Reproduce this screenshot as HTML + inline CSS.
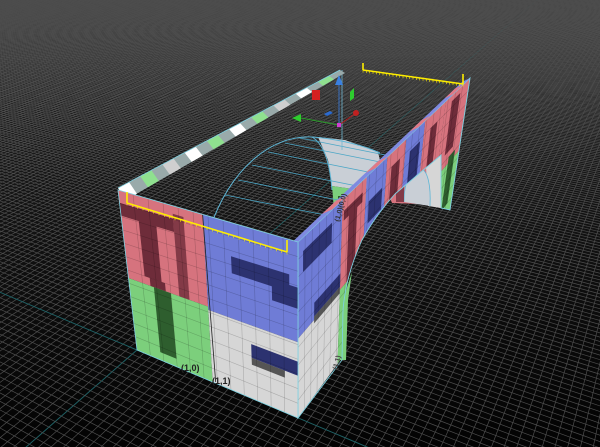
<!DOCTYPE html>
<html><head><meta charset="utf-8"><style>
html,body{margin:0;padding:0;background:#0a0a0a;width:600px;height:447px;overflow:hidden}
svg{display:block}
text{font-family:"Liberation Sans",sans-serif;font-size:9px;fill:#222;font-weight:bold}
</style></head><body>
<svg id="s" width="600" height="447" viewBox="0 0 600 447" xmlns="http://www.w3.org/2000/svg">
<defs>
<linearGradient id="bg" x1="0" y1="0" x2="0" y2="1">
<stop offset="0" stop-color="#2c2c2c"/><stop offset="0.4" stop-color="#151515"/><stop offset="1" stop-color="#030303"/>
</linearGradient>
</defs>
<rect width="600" height="447" fill="url(#bg)"/>
<g id="grid"></g>
<g id="box"></g>
<text x="181" y="371">(1,0)</text>
<text x="212" y="384">(1,1)</text>
<text x="0" y="0" transform="translate(337,370) rotate(-75)" style="font-size:7px;fill:#444">(1,1)</text>
<text x="0" y="0" transform="translate(339,222) rotate(-75)" style="font-size:7px;fill:#333">(1,0)(0,0)</text>
</svg>
<script>
var NS="http://www.w3.org/2000/svg";
var grid=document.getElementById('grid'),box=document.getElementById('box');
function el(p,tag,a){var e=document.createElementNS(NS,tag);for(var k in a)e.setAttribute(k,a[k]);p.appendChild(e);return e;}
var a=-0.0304,b=0.0409,v1=[-1025,-140],v2=[722,-162],o=[137,350];
function H(u,v){var w=a*u+b*v+1;return [ (a*u*v1[0]+b*v*v2[0]+o[0])/w,(a*u*v1[1]+b*v*v2[1]+o[1])/w,w];}
function line(fn,col,sw){var d="",pen=false;for(var i=0;i<=300;i++){var p=fn(i/300);if(p[2]<0.06||Math.abs(p[0])>3000||Math.abs(p[1])>3000){pen=false;continue;}d+=(pen?"L":"M")+p[0].toFixed(1)+" "+p[1].toFixed(1);pen=true;}if(d)el(grid,'path',{d:d,stroke:col,'stroke-width':sw,fill:'none'});}
var st=0.2;
for(var i=-300;i<=300;i++){var u=i*st;var c=(i==0)?'#1f6064':'#4d4d4d';line(function(t){return H(u,-60+t*160);},c,i==0?1:0.7);}
for(var j=-300;j<=500;j++){var v=j*st;var c=(j==0)?'#1f6064':'#4d4d4d';line(function(t){return H(-60+t*120,v);},c,j==0?1:0.7);}
function L(p,q,t){return [p[0]+(q[0]-p[0])*t,p[1]+(q[1]-p[1])*t];}
var TL=[118,190],TR=[298,242],BR=[298,418],BL=[137,350];
function F(u,v){return L(L(TL,TR,u),L(BL,BR,u),v);}
var T0=[298,242],T1=[470,78],B0=[298,418],B1=[450,210];
function S(t,s){return L(L(T0,T1,t),L(B0,B1,t),s);}
function quad(fn,u0,u1,v0,v1,col,extra){var p=[fn(u0,v0),fn(u1,v0),fn(u1,v1),fn(u0,v1)];var at={points:pts(p),fill:col};for(var k in extra)at[k]=extra[k];return el(box,'polygon',at);}
function pts(arr){return arr.map(function(q){return q[0].toFixed(1)+","+q[1].toFixed(1)}).join(" ");}
var R='#d6737e',Bl='#6f7cd6',G='#7ccf7c',Gy='#d6d6d6',DR='#6e2c3a',DB='#2c3270',DG='#2e5e2e';

// arch inside box
el(box,'polygon',{points:"318,137 345,140 378,152 386,185 360,190 332,186 328,160",fill:'#c9cfd6'});
el(box,'polygon',{points:"332,186 360,190 372,198 350,212 334,210",fill:G});
el(box,'rect',{x:338,y:196,width:10,height:6,fill:DG});
el(box,'path',{d:"M210,228 C230,170 270,135 312,137 C340,139 365,146 380,153",stroke:'#5fb6d6','stroke-width':1,fill:'none'});
el(box,'path',{d:"M312,137 C325,145 330,165 332,190",stroke:'#5fb6d6','stroke-width':1,fill:'none'});
[[225,195],[238,180],[252,165],[268,152],[285,143],[300,138]].forEach(function(p){el(box,'line',{x1:p[0],y1:p[1],x2:p[0]+110,y2:p[1]+22,stroke:'#4aa6c6','stroke-width':0.8});});
el(box,'line',{x1:342,y1:70,x2:342,y2:150,stroke:'#6fb6d0','stroke-width':0.8});

// left wall top strip
var lt=[[118,188],[340,70],[345,73],[126,200]];
el(box,'polygon',{points:pts(lt),fill:'#9aa'});
for(var k=0;k<10;k++){var t0=k/10,t1=(k+0.5)/10;var cc=['#ffffff','#8fe08f','#cfcfcf','#ffffff','#8fe08f'][k%5];
 el(box,'polygon',{points:pts([L(lt[0],lt[1],t0),L(lt[0],lt[1],t1),L(lt[3],lt[2],t1),L(lt[3],lt[2],t0)]),fill:cc});}
el(box,'line',{x1:118,y1:188,x2:340,y2:70,stroke:'#7fd0e0','stroke-width':0.8});

// view through arch: inner far wall
el(box,'polygon',{points:"390,198 441,155 441,208 420,204 392,203",fill:R});
el(box,'polygon',{points:"426,166 441,155 441,208 428,206",fill:Gy});
el(box,'path',{d:"M404,202 C404,180 412,168 420,168 C428,170 431,186 430,206",fill:'#c9cfd6',stroke:'#5fb6d6','stroke-width':0.8});
el(box,'polygon',{points:"396,185 404,182 404,202 396,202",fill:DR,opacity:0.8});
// green leg inner
el(box,'polygon',{points:"340,360 343,300 352,272 348,300 346,360",fill:G});

// side face
var cp=el(box,'clipPath',{id:'sc'});
var d="M298,242 L470,78 L450,210 L441,208 L441,155 L395,194 C385,205 372,222 362,240 C352,262 345,285 343,310 L342,360 L298,418 Z";
el(cp,'path',{d:d});
var sg=el(box,'g',{'clip-path':'url(#sc)'});
function squad(t0,t1,s0,s1,col){el(sg,'polygon',{points:pts([S(t0,s0),S(t1,s0),S(t1,s1),S(t0,s1)]),fill:col});}
var segs=[[0,0.26,Bl,Gy],[0.26,0.4,R,G],[0.4,0.52,Bl,R],[0.52,0.63,R,R],[0.63,0.74,Bl,R],[0.74,0.86,R,G],[0.86,1,R,G]];
segs.forEach(function(g){squad(g[0],g[1],0,0.55,g[2]);squad(g[0],g[1],0.55,1,g[3]);});
squad(0.03,0.2,0.08,0.2,DB);squad(0.1,0.26,0.45,0.53,DB);squad(0.1,0.26,0.53,0.57,'#555');
squad(0.3,0.35,0.12,0.55,DR);squad(0.27,0.38,0.08,0.14,DR);squad(0.42,0.5,0.18,0.32,DB);squad(0.55,0.6,0.1,0.4,DR);
squad(0.66,0.72,0.12,0.35,DB);squad(0.78,0.82,0.1,0.4,DR);squad(0.9,0.95,0.05,0.45,DR);squad(0.93,0.97,0.5,0.9,DG);
for(var i=1;i<24;i++){var t=i/24;var p0=S(t,0),p1=S(t,1);el(sg,'line',{x1:p0[0],y1:p0[1],x2:p1[0],y2:p1[1],stroke:'rgba(0,0,0,0.18)','stroke-width':0.6});}
for(var i=1;i<10;i++){var s=i/10;var p0=S(0,s),p1=S(1,s);el(sg,'line',{x1:p0[0],y1:p0[1],x2:p1[0],y2:p1[1],stroke:'rgba(0,0,0,0.18)','stroke-width':0.6});}
el(box,'path',{d:d,fill:'none',stroke:'#7fd0e0','stroke-width':0.9});
// right wall top strip
var A=[287,247],Bp=[462,82],C=[298,242],D=[470,78];
el(box,'polygon',{points:pts([A,C,D,Bp]),fill:'#7f8ae0'});
[[0.2,0.28],[0.45,0.52],[0.7,0.77],[0.9,0.96]].forEach(function(r){el(box,'polygon',{points:pts([L(A,Bp,r[0]),L(A,Bp,r[1]),L(C,D,r[1]),L(C,D,r[0])]),fill:'#e07a86'});});

// front face
quad(F,0,0.47,0,0.55,R);quad(F,0.47,1,0,0.57,Bl);
quad(F,0,0.47,0.55,1,G);quad(F,0.47,1,0.57,1,Gy);
quad(F,0,0.3,0.08,0.16,DR);quad(F,0.1,0.2,0.08,0.5,DR);quad(F,0.3,0.36,0.05,0.55,DR,{opacity:0.8});quad(F,0.13,0.22,0.5,0.55,DR);
quad(F,0.62,0.95,0.2,0.3,DB);quad(F,0.85,1,0.26,0.38,DB);quad(F,0.72,1,0.68,0.76,DB);quad(F,0.72,0.92,0.76,0.8,'#555');
quad(F,0.15,0.25,0.55,0.95,DG);
for(var i=1;i<12;i++){var u=i/12;var p0=F(u,0),p1=F(u,1);el(box,'line',{x1:p0[0],y1:p0[1],x2:p1[0],y2:p1[1],stroke:'rgba(0,0,0,0.2)','stroke-width':0.6});}
for(var i=1;i<12;i++){var v=i/12;var p0=F(0,v),p1=F(1,v);el(box,'line',{x1:p0[0],y1:p0[1],x2:p1[0],y2:p1[1],stroke:'rgba(0,0,0,0.2)','stroke-width':0.6});}
var fd=F(0.47,0),fe=F(0.47,1);el(box,'line',{x1:fd[0],y1:fd[1],x2:fe[0]+3,y2:fe[1],stroke:'#222','stroke-width':0.8});
el(box,'polygon',{points:pts([TL,TR,BR,BL]),fill:'none',stroke:'#7fd0e0','stroke-width':0.8});
function yl(x1,y1,x2,y2){el(box,'line',{x1:x1,y1:y1,x2:x2,y2:y2,stroke:'#ffee00','stroke-width':1.5});for(var k=0;k<=30;k++){var p=L([x1,y1],[x2,y2],k/30);el(box,'line',{x1:p[0],y1:p[1],x2:p[0],y2:p[1]+2.5,stroke:'#ffee00','stroke-width':0.6});}}
yl(127,203,287,252);yl(363,70,463,84);
el(box,'polyline',{points:"127,192 127,203",stroke:'#ffee00','stroke-width':1.6});
el(box,'polyline',{points:"287,240 287,252",stroke:'#ffee00','stroke-width':1.6});
el(box,'polyline',{points:"363,63 363,70",stroke:'#ffee00','stroke-width':1.6});
el(box,'polyline',{points:"463,74 463,84",stroke:'#ffee00','stroke-width':1.6});
// gizmo
el(box,'line',{x1:339,y1:125,x2:301,y2:118,stroke:'#2a9a2a','stroke-width':1});
el(box,'line',{x1:339,y1:125,x2:356,y2:113,stroke:'#b02020','stroke-width':1});
el(box,'line',{x1:339,y1:125,x2:339,y2:82,stroke:'#3a70c0','stroke-width':1});
el(box,'polygon',{points:"339,75 335,85 343,85",fill:'#3a80e0'});
el(box,'polygon',{points:"292,118 301,114 301,122",fill:'#2ecc2e'});
el(box,'rect',{x:312,y:90,width:8,height:10,fill:'#d42020'});
el(box,'polygon',{points:"350,92 354,88 354,98 350,101",fill:'#2ecc2e'});
el(box,'polygon',{points:"324,114 330,111 333,113 327,116",fill:'#2a6ad0'});
el(box,'circle',{cx:356,cy:113,r:3,fill:'#c02020'});
el(box,'rect',{x:337,y:123,width:4,height:4,fill:'#d040d0'});
</script>
</body></html>
